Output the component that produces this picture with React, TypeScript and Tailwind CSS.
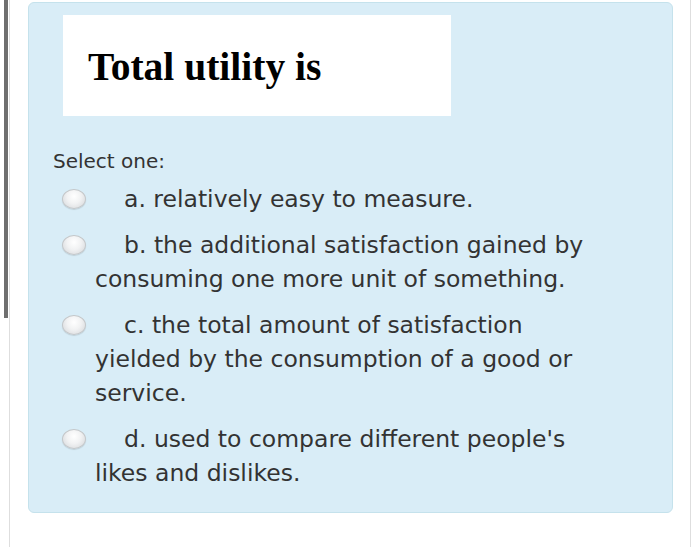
import { ReactNode } from "react";

const options: { key: string; text: string }[] = [
  { key: "a", text: "relatively easy to measure." },
  { key: "b", text: "the additional satisfaction gained by consuming one more unit of something." },
  { key: "c", text: "the total amount of satisfaction yielded by the consumption of a good or service." },
  { key: "d", text: "used to compare different people's likes and dislikes." },
];

function Radio() {
  return (
    <span className="inline-block h-[20px] w-[24px] -ml-[33px] mr-[38px] align-[-2px] rounded-[50%] border border-[#c4c7c9] bg-[radial-gradient(ellipse_at_50%_35%,#ffffff_0%,#f1f2f3_45%,#d2d5d8_100%)] shadow-[0_1px_1px_rgba(0,0,0,0.12)]" />
  );
}

function Option({ label, children }: { label: string; children: ReactNode }) {
  return (
    <div className="pl-[42px] pr-[74px] text-[23.5px] leading-[34px]">
      <Radio />
      {label}. {children}
    </div>
  );
}

export default function App() {
  return (
    <div className="flex h-[547px] w-[700px] bg-white">
      <div className="ml-[4px] h-[318px] w-[4px] bg-[#6f6f6f]" />
      <div className="ml-[1px] h-full w-[1px] bg-[#dedede]" />
      <div className="ml-[18px] mt-[2px] h-[511px] w-[645px] rounded-[6px] border border-[#c5e2ec] bg-[#d9edf7] pl-[24px] pt-[12px] font-['DejaVu_Sans',Verdana,sans-serif] text-[20px] text-[#333333]">
        <div className="ml-[10px] flex h-[101px] w-[388px] items-center bg-white pl-[25px]">
          <h1 className="mt-[4px] font-['Liberation_Serif','Times_New_Roman',serif] text-[39.5px] font-bold leading-none text-black">
            Total utility is
          </h1>
        </div>
        <div className="mt-[28px] leading-[34px]">Select one:</div>
        <div className="mt-[4px] flex flex-col gap-[12px]">
          {options.map((o) => (
            <Option key={o.key} label={o.key}>
              {o.text}
            </Option>
          ))}
        </div>
      </div>
      <div className="ml-[17px] h-full w-[1px] bg-[#dedede]" />
    </div>
  );
}
